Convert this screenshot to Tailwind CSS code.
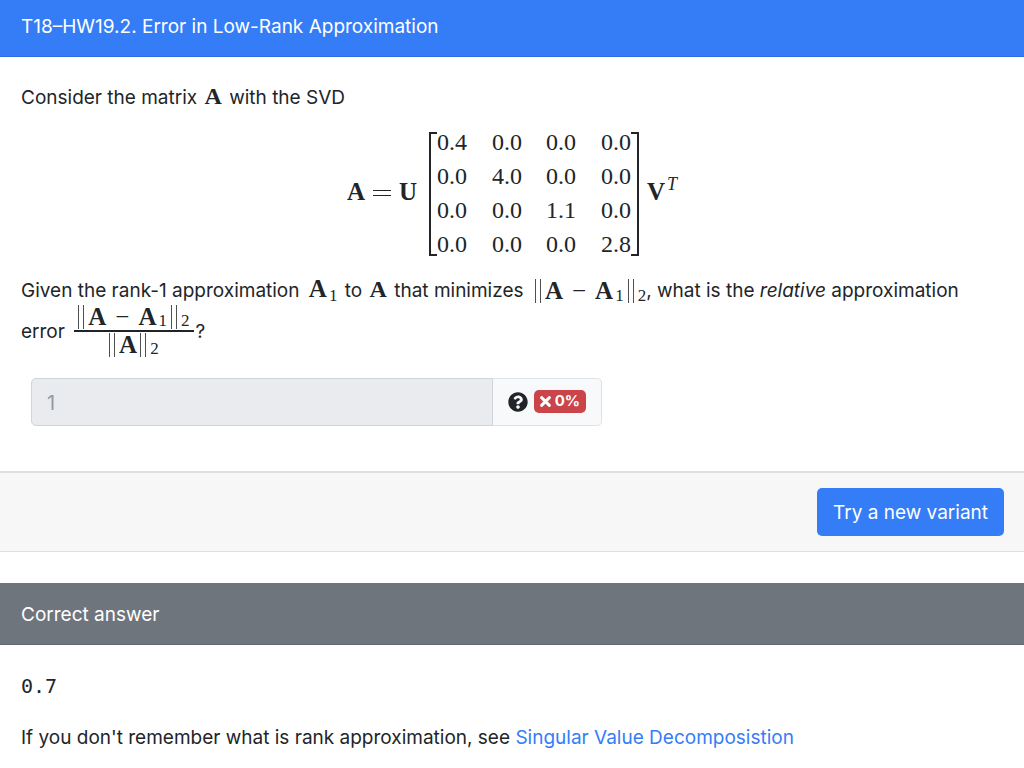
<!DOCTYPE html>
<html lang="en">
<head>
<meta charset="utf-8">
<meta name="viewport" content="width=device-width, initial-scale=1">
<title>Error in Low-Rank Approximation</title>
<script src="https://cdn.jsdelivr.net/npm/@tailwindcss/browser@4"></script>
</head>
<body class="bg-white font-['Inter','Liberation_Sans',sans-serif] text-[19px] leading-[30px] text-[#212529]">
<main>
  <section>
    <header class="border-b border-[#2f6fdd] bg-[#347df7] px-[21px] pt-[12px] pb-[14px] text-white"><h1>T18–HW19.2. Error in Low-Rank Approximation</h1></header>
    <div class="px-[21px] pt-[26px] pb-[45px]">
      <p>Consider the matrix <b class="mx-[2px] font-['Liberation_Serif',serif] text-[24px] leading-none">A</b> with the SVD</p>
      <div class="mt-[19px] flex items-center justify-center font-['Liberation_Serif',serif] text-[24px]">
        <b class="pb-1 text-[25px]">A</b><svg class="mx-[8px] mb-[2px] w-[18px]" viewBox="0 0 18 8" fill="none" stroke="currentColor" role="img" aria-label="equals"><path d="M0 1.500h18M0 6.500h18"/></svg><b class="pb-1 text-[25px]">U</b>
        <div class="ml-[12px] flex">
          <span class="w-[8px] border-2 border-r-0 border-[#212529]"></span>
          <table class="-mt-[7px] -mb-[5px] text-[24px] leading-[34px]">
            <tbody>
              <tr><td class="pr-[25px]">0.4</td><td class="pr-[24px]">0.0</td><td class="pr-[25px]">0.0</td><td>0.0</td></tr>
              <tr><td>0.0</td><td>4.0</td><td>0.0</td><td>0.0</td></tr>
              <tr><td>0.0</td><td>0.0</td><td>1.1</td><td>0.0</td></tr>
              <tr><td>0.0</td><td>0.0</td><td>0.0</td><td>2.8</td></tr>
            </tbody>
          </table>
          <span class="w-[8px] border-2 border-l-0 border-[#212529]"></span>
        </div>
        <b class="ml-[8px] pb-1 text-[25px]">V</b><i class="ml-[2px] pb-[20px] text-[18px]">T</i>
      </div>
      <p class="mt-[20px] leading-[26px]">Given the rank-1 approximation <span class="mr-[2px] ml-[4px] font-['Liberation_Serif',serif] text-[25px] leading-none"><b>A</b><sub class="bottom-0 ml-[2px] align-[-4px] text-[17px]">1</sub></span> to <b class="mx-[2px] font-['Liberation_Serif',serif] text-[24px] leading-none">A</b> that minimizes <span class="ml-[4px] inline-flex items-center align-[-6px] font-['Liberation_Serif',serif] text-[25px] leading-6"><span class="mr-[4px] ml-[2px] h-6 w-[6px] border-x border-[#212529]/80"></span><b>A</b><span class="mx-[9px]">−</span><b>A</b><sub class="bottom-0 mr-[4px] ml-[2px] pt-[9px] text-[17px] leading-4">1</sub><span class="h-6 w-[6px] border-x border-[#212529]/80"></span><sub class="bottom-0 ml-[4px] pt-[9px] text-[17px] leading-4">2</sub></span>, what is the <em>relative</em> approximation error <span class="mr-[2px] ml-[4px] inline-flex flex-col items-center align-[9px] font-['Liberation_Serif',serif] text-[25px] leading-6"><span class="flex items-center border-b-2 border-[#212529] px-[4px] pb-px"><span class="mr-[4px] h-6 w-[6px] border-x border-[#212529]/80"></span><b>A</b><span class="mx-[9px]">−</span><b>A</b><sub class="bottom-0 mr-[4px] ml-[2px] pt-[9px] text-[17px] leading-4">1</sub><span class="h-6 w-[6px] border-x border-[#212529]/80"></span><sub class="bottom-0 ml-[4px] pt-[9px] text-[17px] leading-4">2</sub></span><span class="flex items-center"><span class="mr-[4px] h-6 w-[6px] border-x border-[#212529]/80"></span><b>A</b><span class="ml-[3px] h-6 w-[6px] border-x border-[#212529]/80"></span><sub class="bottom-0 ml-[4px] pt-[9px] text-[17px] leading-4">2</sub></span></span>?</p>
      <div class="mt-[21px] ml-[10px] flex h-12 w-full max-w-[571px]">
        <input aria-label="Answer" disabled value="1" class="min-w-0 flex-1 rounded-l-[5px] border border-[#ced4da] bg-[#e9ebef] px-[15px] pt-[2px] text-[20px] text-[#8f9ba6]">
        <div class="flex items-center gap-[6px] rounded-r-[5px] border border-l-0 border-[#dee2e6] bg-[#f8f9fa] pr-[15px] pl-[15px]">
          <button aria-label="Help" class="text-[#212529]"><svg class="size-5" viewBox="0 0 512 512"><path fill="currentColor" d="M504 256c0 137-111 248-248 248S8 393 8 256 119 8 256 8s248 111 248 248zM262.700 90c-54.500 0-89.300 23-116.500 63.800-3.500 5.300-2.400 12.400 2.700 16.300l34.700 26.300c5.200 3.900 12.600 3 16.700-2.100 17.900-22.700 30.100-35.800 57.300-35.800 20.400 0 45.700 13.100 45.700 33 0 15-12.400 22.700-32.500 34C247.100 238.500 216 254.900 216 296v4c0 6.600 5.400 12 12 12h56c6.600 0 12-5.400 12-12v-1.300c0-28.500 83.200-29.600 83.200-106.700 0-58-60.200-102-116.500-102zM256 338c-25.400 0-46 20.600-46 46s20.600 46 46 46 46-20.600 46-46-20.600-46-46-46z"/></svg></button>
          <span class="mb-[2px] flex h-[23px] items-center gap-[4px] rounded-[5px] bg-[#cb444a] px-[6px] text-[15px] font-bold text-white"><svg class="size-[11px]" viewBox="0 0 10 10" fill="none" stroke="currentColor" stroke-width="2.700" stroke-linecap="round"><path d="M1.500 1.500l7 7M8.500 1.500l-7 7"/></svg>0%</span>
        </div>
      </div>
    </div>
    <footer class="flex justify-end border-t-2 border-b border-[#dfdfdf] bg-[#f7f7f7] px-[20px] py-[15px]"><button class="h-12 rounded-[5px] bg-[#347df7] px-4 pt-[2px] text-white">Try a new variant</button></footer>
  </section>
  <section class="mt-[31px]">
    <header class="border-b border-[#62686f] bg-[#6f757c] px-[21px] pt-[17px] pb-[14px] text-white"><h2>Correct answer</h2></header>
    <div class="px-[21px] pt-[26px]">
      <code class="block font-['DejaVu_Sans_Mono',monospace] text-[20px]">0.7</code>
      <p class="mt-[22px]">If you don't remember what is rank approximation, see <a href="#" class="text-[#347df7]">Singular Value Decomposistion</a></p>
    </div>
  </section>
</main>
</body>
</html>
